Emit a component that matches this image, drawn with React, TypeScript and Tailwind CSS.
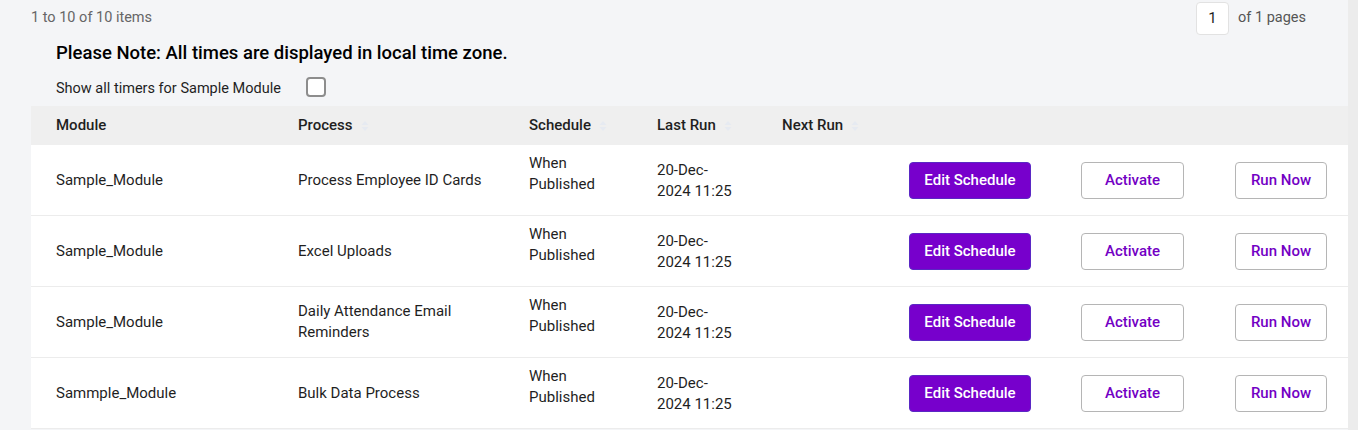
import React from "react";

type Row = {
  module: string;
  process: string;
};

const rows: Row[] = [
  { module: "Sample_Module", process: "Process Employee ID Cards" },
  { module: "Sample_Module", process: "Excel Uploads" },
  { module: "Sample_Module", process: "Daily Attendance Email Reminders" },
  { module: "Sammple_Module", process: "Bulk Data Process" },
];

const cols = "grid grid-cols-[242px_231px_128px_125px_127px_172px_154px_138px]";

function SortIcon() {
  return (
    <svg width="8" height="12" viewBox="0 0 8 12" className="ml-2 text-[#e6eaf1]" fill="currentColor">
      <path d="M4 1 L7.5 5 H0.5 Z" />
      <path d="M4 11 L0.5 7 H7.5 Z" />
    </svg>
  );
}

function HeaderCell({ label, sort = true }: { label: string; sort?: boolean }) {
  return (
    <div className="flex items-center pl-[25px]">
      <span>{label}</span>
      {sort && <SortIcon />}
    </div>
  );
}

export default function App() {
  return (
    <div className="flex w-[1358px] min-h-[430px] font-['Roboto','Liberation_Sans',sans-serif] text-[#1f1f1f]">
      <div className="w-[1348px] bg-[#f4f5f7]">
        {/* Pager */}
        <div className="flex h-[36px] items-center justify-between pl-[31px] pr-[42px]">
          <span className="text-[14.5px] text-[#666]">1 to 10 of 10 items</span>
          <div className="flex items-center gap-[9px]">
            <div className="flex h-[33px] w-[33px] items-center justify-center rounded-[4px] border border-[#e2e2e2] bg-white text-[15px]">
              1
            </div>
            <span className="text-[14.5px] text-[#555]">of 1 pages</span>
          </div>
        </div>

        {/* Note */}
        <div className="pl-[56px]">
          <div className="flex h-[36px] items-center text-[18.5px] font-medium text-black">
            Please Note: All times are displayed in local time zone.
          </div>
          <div className="flex h-[33px] items-center text-[14.5px]">
            <span>Show all timers for Sample Module</span>
            <span className="ml-[25px] -mt-[3px] h-[20px] w-[20px] rounded-[4px] border-2 border-[#8d8d8d] bg-white" />
          </div>
        </div>

        {/* Table */}
        <div className="ml-[31px] mt-px">
          <div className={`${cols} h-[39px] bg-[#efefef] text-[15px] font-medium`}>
            <HeaderCell label="Module" sort={false} />
            <HeaderCell label="Process" />
            <HeaderCell label="Schedule" />
            <HeaderCell label="Last Run" />
            <HeaderCell label="Next Run" />
            <div />
            <div />
            <div />
          </div>
          {rows.map((r, i) => (
            <div
              key={i}
              className={`${cols} h-[71px] border-b border-[#ececec] bg-white text-[15px] leading-[21px]`}
            >
              <div className="flex items-center pl-[25px]">{r.module}</div>
              <div className="flex items-center pl-[25px] pr-[20px]">{r.process}</div>
              <div className="flex items-center pl-[25px] pr-[10px] pb-[12px]">
                When
                <br />
                Published
              </div>
              <div className="flex items-center pl-[25px] pr-[10px] pt-[2px]">
                20-Dec-
                <br />
                2024 11:25
              </div>
              <div />
              <div className="flex items-center pl-[25px]">
                <button className="h-[37px] w-[122px] rounded-[4px] border border-[#5a28c4] bg-[#7700cc] text-[15px] font-medium text-white">
                  Edit Schedule
                </button>
              </div>
              <div className="flex items-center pl-[25px]">
                <button className="h-[37px] w-[103px] rounded-[4px] border border-[#b5b5b5] bg-white text-[15px] font-medium text-[#7300c4]">
                  Activate
                </button>
              </div>
              <div className="flex items-center pl-[25px]">
                <button className="h-[37px] w-[92px] rounded-[4px] border border-[#b5b5b5] bg-white text-[15px] font-medium text-[#7300c4]">
                  Run Now
                </button>
              </div>
            </div>
          ))}
        </div>
      </div>
      <div className="flex-1 bg-[#ececec]" />
    </div>
  );
}
